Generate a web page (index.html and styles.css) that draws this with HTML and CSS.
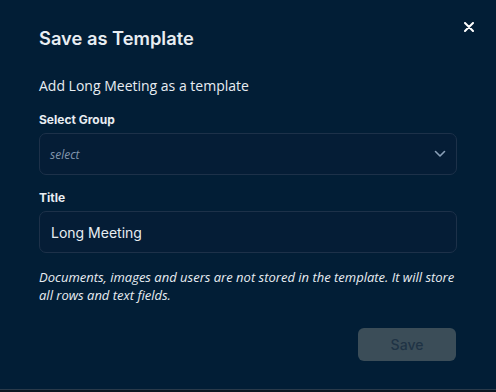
FILE: index.html
```html
<!DOCTYPE html>
<html lang="en">
<head>
  <meta charset="UTF-8">
  <meta name="viewport" content="width=device-width, initial-scale=1.0">
  <title>Save as Template</title>
  <link rel="stylesheet" href="styles.css">
</head>
<body>
  <div class="modal">
    <button class="close-btn" aria-label="Close">
      <svg width="10" height="10" viewBox="0 0 10 10">
        <path d="M1 1L9 9M9 1L1 9" stroke="#ffffff" stroke-width="2" stroke-linecap="round"/>
      </svg>
    </button>

    <h2 class="modal-title">Save as Template</h2>
    <p class="intro">Add Long Meeting as a template</p>

    <form class="template-form">
      <div class="field">
        <label for="groupSelect">Select Group</label>
        <div class="select-box" id="groupSelect">
          <span class="placeholder">select</span>
          <svg width="12" height="8" viewBox="0 0 12 8">
            <path d="M1.5 1.5L6 6L10.5 1.5" fill="none" stroke="#8aa0b8" stroke-width="1.6" stroke-linecap="round" stroke-linejoin="round"/>
          </svg>
        </div>
      </div>

      <div class="field">
        <label for="templateTitle">Title</label>
        <input type="text" id="templateTitle" value="Long Meeting">
      </div>

      <p class="note">Documents, images and users are not stored in the template. It will store all rows and text fields.</p>

      <div class="actions">
        <button type="submit" class="save-btn" disabled>Save</button>
      </div>
    </form>
  </div>
</body>
</html>
```

FILE: styles.css
```css
body {
  margin: 0;
  padding: 0;
  background-color: #0b1622;
  font-family: "Open Sans", sans-serif;
}

.modal {
  position: relative;
  box-sizing: border-box;
  height: 390px;
  padding: 26px 39px 0 39px;
  background-color: #021e36;
  border-bottom: 1px solid #2a3a4a;
  color: #e8edf2;
}

.close-btn {
  position: absolute;
  top: 22px;
  right: 22px;
  width: 10px;
  height: 10px;
  padding: 0;
  border: none;
  background: none;
  display: flex;
  cursor: pointer;
}

.modal-title {
  margin: 0;
  font-family: Inter, sans-serif;
  font-size: 18.3px;
  font-weight: 600;
  line-height: 24px;
  color: #e8edf2;
}

.intro {
  margin: 26px 0 0 0;
  font-size: 14px;
  line-height: 20px;
}

.template-form {
  display: flex;
  flex-direction: column;
  margin-top: 16px;
}

.field {
  display: flex;
  flex-direction: column;
  gap: 5px;
  margin-bottom: 15px;
}

.field label {
  font-family: Inter, sans-serif;
  font-size: 12px;
  font-weight: 700;
  line-height: 16px;
  color: #e8edf2;
}

.select-box,
input[type="text"] {
  box-sizing: border-box;
  height: 42px;
  border: 1px solid #1d3149;
  border-radius: 7px;
  background-color: #051d36;
}

.select-box {
  display: flex;
  align-items: center;
  justify-content: space-between;
  padding: 0 10px 0 10px;
}

.placeholder {
  font-size: 12px;
  font-style: italic;
  color: #8296ad;
}

input[type="text"] {
  padding: 0 11px;
  font-family: Inter, sans-serif;
  font-size: 14px;
  color: #e8edf2;
  outline: none;
}

.note {
  margin: 0;
  font-size: 13px;
  font-style: italic;
  line-height: 18px;
  color: #e8edf2;
}

.actions {
  display: flex;
  justify-content: flex-end;
  margin-top: 24px;
}

.save-btn {
  width: 98px;
  height: 33px;
  margin-right: 1px;
  border: none;
  border-radius: 6px;
  background-color: #3b4d58;
  color: #1f3345;
  font-family: Inter, sans-serif;
  font-size: 14px;
  font-weight: 500;
}
```
